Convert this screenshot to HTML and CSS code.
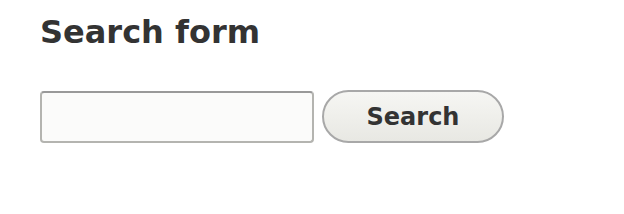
FILE: index.html
```html
<!DOCTYPE html>
<html lang="en">

<head>
    <meta charset="UTF-8">
    <title>Search form</title>
    <link rel="stylesheet" href="styles.css">
</head>

<body>
    <div class="search-block">
        <h2>Search form</h2>
        <form class="search-form">
            <input type="search" class="search-input" aria-label="Search">
            <button type="submit" class="search-button">Search</button>
        </form>
    </div>
</body>

</html>
```

FILE: styles.css
```css
body {
    margin: 0;
    background: #fff;
    font-family: 'DejaVu Sans', Verdana, sans-serif;
    color: #333;
}

.search-block {
    padding: 12px 40px;
}

h2 {
    margin: 0 0 38px;
    font-size: 32px;
    line-height: 40px;
    font-weight: bold;
    color: #333;
}

.search-form {
    display: flex;
    align-items: flex-end;
    gap: 8px;
}

.search-input {
    box-sizing: border-box;
    width: 274px;
    height: 52px;
    margin: 0;
    border: 2px solid #b4b4b0;
    border-top-color: #999;
    border-radius: 4px;
    background: #fbfbfa;
    outline: none;
}

.search-button {
    box-sizing: border-box;
    width: 182px;
    height: 53px;
    margin: 0;
    border: 2px solid #a8a8a8;
    border-radius: 27px;
    background: linear-gradient(#f6f6f3, #e8e8e3);
    font-family: 'DejaVu Sans', Verdana, sans-serif;
    font-size: 24px;
    font-weight: bold;
    color: #333;
    cursor: pointer;
}
```
